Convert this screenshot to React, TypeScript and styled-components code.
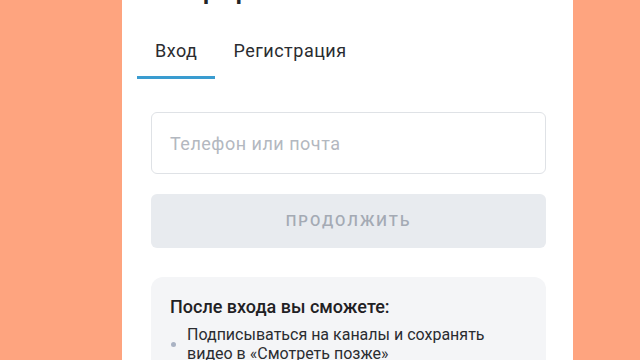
import React from "react";
import styled, { createGlobalStyle } from "styled-components";

const Global = createGlobalStyle`
  html, body { margin: 0; padding: 0; }
  body { font-family: Roboto, "Noto Sans", sans-serif; }
`;

const Page = styled.div`
  width: 640px;
  height: 360px;
  overflow: hidden;
  background: #fea47f;
  display: flex;
  padding-left: 122px;
  box-sizing: border-box;
`;

const Panel = styled.div`
  width: 451px;
  background: #ffffff;
  display: flex;
  flex-direction: column;
`;

const Header = styled.div`
  margin-top: -22px;
  height: 26px;
  display: flex;
  align-items: center;
  gap: 20px;
  padding-left: 28px;
`;

const Title = styled.h1`
  margin: 0;
  font-size: 24px;
  line-height: 26px;
  font-weight: 700;
  color: #222428;
`;

const Tabs = styled.div`
  display: flex;
  padding-left: 15px;
`;

const Tab = styled.div<{ $active?: boolean }>`
  padding: 36px 18px 15px;
  font-size: 18px;
  line-height: 21px;
  letter-spacing: 0.5px;
  color: #2a2c30;
  border-bottom: 3px solid ${(p) => (p.$active ? "#3a9cd0" : "transparent")};
`;

const Body = styled.div`
  display: flex;
  flex-direction: column;
  padding: 33px 27px 0 29px;
`;

const Input = styled.div`
  height: 62px;
  box-sizing: border-box;
  border: 1px solid #dfe2e6;
  border-radius: 6px;
  display: flex;
  align-items: center;
  padding-left: 18px;
  font-size: 18px;
  letter-spacing: 0.5px;
  color: #b3b8c0;
`;

const Button = styled.div`
  margin-top: 20px;
  height: 54px;
  border-radius: 6px;
  background: #e8ebef;
  display: flex;
  align-items: center;
  justify-content: center;
  font-size: 15px;
  font-weight: 500;
  letter-spacing: 2px;
  color: #a4aab4;
`;

const Info = styled.div`
  margin-top: 29px;
  background: #f4f5f7;
  border-radius: 12px;
  padding: 19px 19px 20px;
  display: flex;
  flex-direction: column;
  gap: 7px;
`;

const InfoTitle = styled.div`
  font-size: 18px;
  line-height: 22px;
  font-weight: 500;
  color: #1f2124;
`;

const Item = styled.div`
  display: flex;
  align-items: center;
  gap: 11px;
  padding-left: 1px;
`;

const Dot = styled.span`
  width: 5px;
  height: 5px;
  border-radius: 50%;
  background: #a9b2c3;
  flex-shrink: 0;
`;

const ItemText = styled.div`
  font-size: 16px;
  line-height: 19px;
  color: #2a2c30;
`;

export default function App() {
  return (
    <>
      <Global />
      <Page>
        <Panel>
          <Header>
            <svg width="16" height="16" viewBox="0 0 16 16" fill="none">
              <path d="M14 8H2M7 3L2 8l5 5" stroke="#222428" strokeWidth="2" strokeLinecap="round" strokeLinejoin="round" />
            </svg>
            <Title>Профиль</Title>
          </Header>
          <Tabs>
            <Tab $active>Вход</Tab>
            <Tab>Регистрация</Tab>
          </Tabs>
          <Body>
            <Input>Телефон или почта</Input>
            <Button>ПРОДОЛЖИТЬ</Button>
            <Info>
              <InfoTitle>После входа вы сможете:</InfoTitle>
              <Item>
                <Dot />
                <ItemText>
                  Подписываться на каналы и сохранять
                  <br />
                  видео в «Смотреть позже»
                </ItemText>
              </Item>
            </Info>
          </Body>
        </Panel>
      </Page>
    </>
  );
}
